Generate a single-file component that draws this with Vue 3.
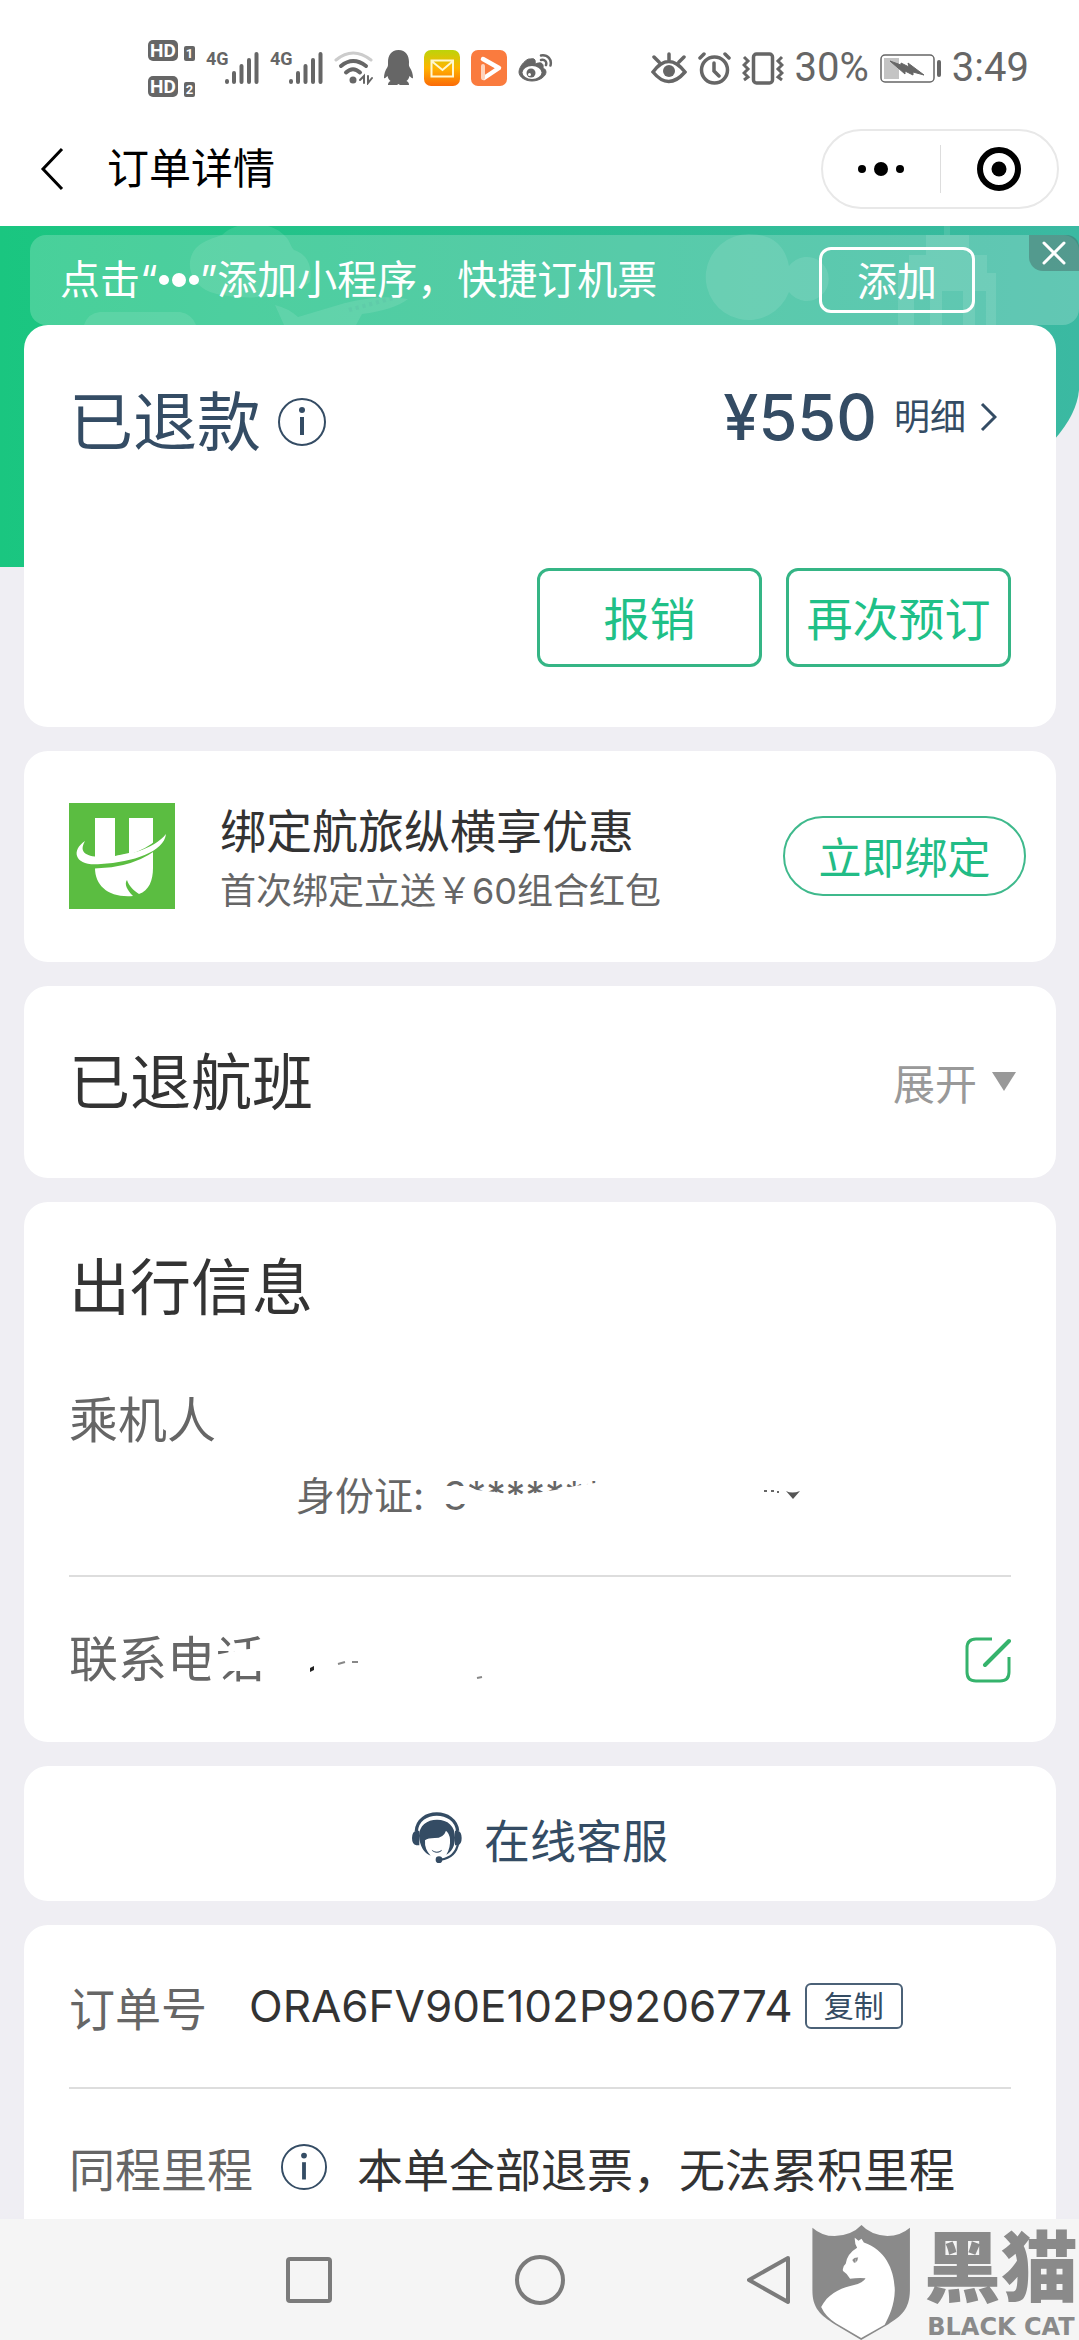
<script setup>
import { ref } from "vue";

const order = ref({
  status: "已退款",
  price: "¥550",
  number: "ORA6FV90E102P9206774",
  mileage: "本单全部退票，无法累积里程",
  idCard: "3*******",
});
const showTip = ref(true);
</script>

<template>
  <div class="page">
    <header class="status-bar">
      <div class="status-group">
        <div class="hd-list">
          <div v-for="n in 2" :key="n" class="hd-row">
            <span class="hd">HD</span><span class="sim">{{ n }}</span>
          </div>
        </div>
        <div v-for="n in 2" :key="n" class="signal">
          <span class="net">4G</span>
          <svg width="35" height="34" viewBox="0 0 35 34" stroke="#666" stroke-width="4" stroke-linecap="round">
            <path d="M3 30v1M10 22v9M17.500 15v16M25 9v22M32.500 3v28" />
          </svg>
        </div>
        <svg width="39" height="34" viewBox="0 0 39 34" fill="none" stroke-width="4" stroke-linecap="round">
          <path d="M2 9Q19 -5 37 9" stroke="#ccc" stroke-width="3" />
          <path d="M7 15Q19 5 32 15M12 21.500Q19 15 26 21.500" stroke="#666" />
          <circle cx="19" cy="29" r="3.500" fill="#666" />
          <path d="M26 29l4-4v7M34 25v7l4-5" stroke="#666" stroke-width="2" />
        </svg>
        <svg width="29" height="36" viewBox="0 0 29 36" fill="#666">
          <path d="M14.500 0C7 0 4 6 4 12c0 2 .3 3-.5 5C1 21 0 24 0 28c1 1 2-1 3.500-2 .5 2 1.500 4 3 5-2 1-2.500 2-2.500 4h9l1.500-1 1.500 1h9c0-2-.5-3-2.500-4 1.500-1 2.500-3 3-5 1.500 1 2.500 3 3.500 2 0-4-1-7-3.500-11-.8-2-.5-3-.5-5 0-6-3-12-10.500-12z" />
        </svg>
        <svg width="36" height="36" viewBox="0 0 36 36">
          <defs>
            <linearGradient id="mailFill" x2="0" y2="1">
              <stop offset="0" stop-color="#bcd40a" />
              <stop offset="0.500" stop-color="#ffb400" />
              <stop offset="1" stop-color="#fb6a08" />
            </linearGradient>
          </defs>
          <rect width="36" height="36" rx="7" fill="url(#mailFill)" />
          <path d="M7.500 10.500h21.500v16h-21.500zM7.500 11l11 9 10.500-9" fill="none" stroke="#fff7d0" stroke-width="2" />
        </svg>
        <svg width="36" height="36" viewBox="0 0 36 36">
          <rect width="36" height="36" rx="7" fill="#fa7b3e" />
          <path d="M12 9l16 9-15 10" fill="none" stroke="#fff" stroke-width="4.500" stroke-linecap="round" stroke-linejoin="round" />
          <path d="M12 16v12" stroke="#ffd3bb" stroke-width="4" stroke-linecap="round" />
        </svg>
        <svg width="35" height="29" viewBox="0 0 35 29" fill="none" stroke="#666">
          <path d="M12 5c-3-1-11 7-11 13 0 5 6 9 13 9 8 0 14-5 14-9 0-3-3-4-3-4s1-4-2-5c-2-.6-6 1-6 1s1-4-1-5c-1-.5-3 0-4 0z" fill="#666" />
          <ellipse cx="14" cy="18.500" rx="9.500" ry="6.500" fill="#fff" stroke="none" />
          <circle cx="13" cy="19" r="4.500" fill="#666" stroke="none" />
          <circle cx="11.500" cy="20.500" r="1.500" fill="#fff" stroke="none" />
          <path d="M23 6c4-1 6 2 5 5M23 1.500c7-1 11 4 9.500 10" stroke-width="2.500" stroke-linecap="round" />
        </svg>
      </div>
      <div class="status-group">
        <svg width="36" height="32" viewBox="0 0 36 32" fill="none" stroke="#666" stroke-width="3.500" stroke-linecap="round">
          <path d="M2 20Q17.500 -1 34 20Q17.500 39 2 20zM18 8V2M8 10L3 5M28 10l5-5" />
          <circle cx="18" cy="19" r="6" fill="#666" stroke="none" />
        </svg>
        <svg width="33" height="33" viewBox="0 0 33 33" fill="none" stroke="#666" stroke-width="3.500" stroke-linecap="round">
          <circle cx="16.500" cy="18" r="13" />
          <path d="M16 11v8l5 5M2 6l4-4M31 6l-4-4" />
        </svg>
        <svg width="42" height="33" viewBox="0 0 42 33" fill="none" stroke="#666" stroke-width="3.500">
          <rect x="11.500" y="2" width="19" height="29" rx="3" />
          <path d="M2 5l4 4-4 4 4 4-4 4 4 4-4 3M40 5l-4 4 4 4-4 4 4 4-4 4 4 3" stroke-width="3" />
        </svg>
        <span class="status-text">30%</span>
        <svg width="61" height="29" viewBox="0 0 61 29">
          <rect x="1" y="1" width="53" height="27" rx="4" fill="none" stroke="#666" stroke-width="1.500" />
          <rect x="4" y="4" width="15" height="21" fill="#c4c4c4" />
          <path d="M10 7l11 4 0-2 8 4-1-4 16 12-11-3 0 3-8-4 0 3z" fill="#666" stroke="#666" />
          <rect x="57" y="6" width="4" height="17" rx="2" fill="#666" />
        </svg>
        <span class="status-text">3:49</span>
      </div>
    </header>

    <nav class="nav">
      <button class="plain" aria-label="返回">
        <svg width="24" height="44" viewBox="0 0 24 44" fill="none" stroke="#000" stroke-width="3">
          <path d="M22 2L3 22l19 20" />
        </svg>
      </button>
      <h1>订单详情</h1>
      <div class="capsule">
        <button class="plain" aria-label="更多">
          <svg width="48" height="16" viewBox="0 0 48 16">
            <circle cx="5" cy="8" r="4" /><circle cx="24" cy="8" r="7" /><circle cx="43" cy="8" r="4" />
          </svg>
        </button>
        <button class="plain" aria-label="关闭">
          <svg width="44" height="44" viewBox="0 0 44 44">
            <circle cx="22" cy="22" r="19" fill="none" stroke="#000" stroke-width="6" />
            <circle cx="22" cy="22" r="7.500" />
          </svg>
        </button>
      </div>
    </nav>

    <main>
      <svg class="hero" viewBox="0 0 1079 341" preserveAspectRatio="none">
        <defs>
          <linearGradient id="heroFill">
            <stop offset="0" stop-color="#1ac680" />
            <stop offset="1" stop-color="#3bb9a2" />
          </linearGradient>
        </defs>
        <path d="M0 0H1079V164Q1077 188 1054 214L900 341H0z" fill="url(#heroFill)" />
        <g fill="#fff" fill-opacity="0.1">
          <path d="M222 9C235 -5 270 -8 287 12C291 18 291 21 294 24C306 28 313 38 310 56C290 72 240 76 210 66C190 58 184 36 196 22C204 14 214 12 222 9z" />
          <path d="M84 99Q88 87 100 86H180Q192 88 196 99z" />
          <path d="M284 99L275 79Q288 82 298 91L345 77Q380 68 408 73Q394 84 362 88L356 99z" />
          <path d="M749 8a43 43 0 1 0 40 58a22 22 0 1 0 0-26q-6-32-40-32z" />
          <path d="M898 99V47H909V29H926V9H944V0H950V9H969V29H987V47H996V99H986V65H975V99H963V65H942V99H930V65H914V99z" />
        </g>
        <path d="M349 84l48-13" stroke="#35b891" stroke-opacity="0.5" stroke-width="4" stroke-dasharray="3 4" />
      </svg>

      <div v-if="showTip" class="tip">
        <p>
          点击“<svg width="42" height="16" viewBox="0 0 42 16" fill="#fff">
            <circle cx="6" cy="8" r="5" /><circle cx="21" cy="8" r="7" /><circle cx="36" cy="8" r="5" /></svg>”添加小程序，快捷订机票
        </p>
        <button class="tip-add">添加</button>
        <button class="tip-close" aria-label="关闭提示" @click="showTip = false">
          <svg width="24" height="24" viewBox="0 0 24 24" stroke="#fff" stroke-width="3" stroke-linecap="round">
            <path d="M2 2l20 20M22 2L2 22" />
          </svg>
        </button>
      </div>

      <div class="cards">
        <section class="card refund">
          <div class="refund-head">
            <h2>{{ order.status }}</h2>
            <svg class="info" width="48" height="48" viewBox="0 0 48 48">
              <circle cx="24" cy="24" r="23" fill="none" stroke="#344c64" stroke-width="2" />
              <circle cx="24" cy="12" r="3" fill="#344c64" />
              <path d="M24 19v18" stroke="#344c64" stroke-width="4" />
            </svg>
            <a class="price" href="#">
              <strong>{{ order.price }}</strong>
              <span>明细</span>
              <svg width="17" height="30" viewBox="0 0 17 30" fill="none" stroke="#344c64" stroke-width="3">
                <path d="M2 2l13 13L2 28" />
              </svg>
            </a>
          </div>
          <div class="actions">
            <button>报销</button>
            <button>再次预订</button>
          </div>
        </section>

        <section class="card bind">
          <svg width="106" height="106" viewBox="0 0 106 106">
            <rect width="106" height="106" fill="#5bbd41" />
            <path d="M26 15h20v38l14-3V15h24v50c0 12-4 23-14 26-6-4-10-8-12-14-3 4 0 10 6 16-24 2-38-10-38-28z" fill="#fff" />
            <path d="M12 42C3 57 14 63 32 61C60 60 84 48 97 33" fill="none" stroke="#5bbd41" stroke-width="8" />
            <path d="M16 38C1 48 6 64 32 61C64 59 95 49 97 31C84 47 57 53 34 54C18 54 9 50 16 38z" fill="#fff" />
          </svg>
          <div class="bind-text">
            <h3>绑定航旅纵横享优惠</h3>
            <p>首次绑定立送￥60组合红包</p>
          </div>
          <button>立即绑定</button>
        </section>

        <section class="card flights">
          <h2>已退航班</h2>
          <button class="plain">
            展开
            <svg width="26" height="19" viewBox="0 0 26 19"><path d="M1 0h24L13 19z" fill="#999" /></svg>
          </button>
        </section>

        <section class="card travel">
          <h2>出行信息</h2>
          <div class="passenger">
            <p class="label">乘机人</p>
            <p class="id-card">
              <span>身份证:</span>
              <span>{{ order.idCard }}</span>
              <svg class="mask" width="800" height="48" viewBox="0 0 800 48">
                <path d="M370 14H398L408 18L426 20L446 23L466 21L486 18L506 14L526 11L560 6V34H402L396 32H370z" fill="#fff" />
                <path d="M695 19h3M702 19h3M708 20h2" stroke="#666" stroke-width="2" />
                <path d="M717 19q6 3 14 0l-7 8z" fill="#555" />
              </svg>
            </p>
          </div>
          <div class="phone">
            <p class="label">
              联系电话
              <svg class="mask" width="440" height="60" viewBox="0 0 440 60">
                <path d="M141 26L151 24L171 20L198 17V41H160L154 47L144 58L138 38z" fill="#fff" />
                <path d="M241 38l4-2v4l-4 2z" fill="#222" />
                <path d="M269 34l7-2M283 32h6M408 48l5-1" stroke="#888" stroke-width="2" />
              </svg>
            </p>
            <button class="plain" aria-label="修改联系电话">
              <svg width="46" height="46" viewBox="0 0 46 46" fill="none" stroke="#35b36c" stroke-width="3">
                <path d="M27 2H11Q2 2 2 11V35Q2 44 11 44H35Q44 44 44 35V20" />
                <path d="M20 28L44 4" stroke-width="4" stroke-linecap="round" />
              </svg>
            </button>
          </div>
        </section>

        <a class="card service" href="#">
          <svg width="50" height="51" viewBox="100 153 150 153">
            <path d="M113 210C118 142 230 142 237 210" fill="none" stroke="#344c64" stroke-width="10" />
            <path d="M113 209q-13 3-13 22t13 22h9v-44zM237 209q12 3 12 22t-12 22h-8v-44z" fill="#344c64" />
            <path d="M121 225C121 194 145 176 175 176C207 176 230 195 229 230C229 255 219 272 203 281Q216 261 214 235Q213 218 202 209Q195 231 168 231Q148 231 139 238Q137 265 156 284Q125 272 121 225z" fill="#344c64" />
            <path d="M159 266q15 12 31 0q-2 8-15 9-13-1-16-9z" fill="#344c64" />
            <path d="M239 245Q231 290 186 296" fill="none" stroke="#344c64" stroke-width="7" />
            <circle cx="181" cy="296" r="10" fill="#344c64" />
          </svg>
          在线客服
        </a>

        <section class="card detail">
          <div class="detail-row">
            <span class="detail-label">订单号</span>
            <span class="order-no">{{ order.number }}</span>
            <button class="copy">复制</button>
          </div>
          <div class="detail-row">
            <span class="detail-label">同程里程</span>
            <svg width="46" height="46" viewBox="0 0 48 48">
              <circle cx="24" cy="24" r="23" fill="none" stroke="#344c64" stroke-width="2" />
              <circle cx="24" cy="12" r="3" fill="#344c64" />
              <path d="M24 19v18" stroke="#344c64" stroke-width="4" />
            </svg>
            <span>{{ order.mileage }}</span>
          </div>
        </section>
      </div>
    </main>

    <footer class="system-nav">
      <button class="plain" aria-label="最近任务">
        <svg width="48" height="52" viewBox="0 0 48 52" fill="none" stroke="#7b7b7b" stroke-width="4">
          <rect x="3" y="5" width="42" height="42" rx="2" />
        </svg>
      </button>
      <button class="plain" aria-label="主屏幕">
        <svg width="52" height="52" viewBox="0 0 52 52" fill="none" stroke="#7b7b7b" stroke-width="4">
          <circle cx="26" cy="26" r="23" />
        </svg>
      </button>
      <button class="plain" aria-label="后退">
        <svg width="48" height="52" viewBox="0 0 48 52" fill="none" stroke="#7b7b7b" stroke-width="4" stroke-linejoin="round">
          <path d="M41 4L2 26l39 22z" />
        </svg>
      </button>
      <div class="watermark">
        <svg width="98" height="115" viewBox="180 75 291 342">
          <path d="M181 83Q209 108 247 108Q298 106 327 75Q353 104 404 108Q443 107 471 83V270C470 325 446 346 407 370L326 417L247 370C205 343 181 323 181 270z" fill="#8a8a8a" />
          <path d="M307 113L318 122L327 116L334 127C400 150 425 210 426 270C425 315 409 347 396 372L326 411L251 367Q220 348 207 319C228 278 265 263 302 254Q333 247 339 233Q315 231 293 235Q284 219 272 212Q269 199 280 190Q285 160 314 143Q306 131 307 113z" fill="#fff" />
          <path d="M299 179q6-9 18-8q-1 16-12 17zM309 176v10" fill="#8a8a8a" stroke="#fff" />
        </svg>
        <div class="brand">
          <span class="brand-cn">黑猫</span>
          <span class="brand-en">BLACK CAT</span>
        </div>
      </div>
    </footer>
  </div>
</template>

<style>
body {
  margin: 0;
  background: #efeef3;
}
</style>

<style scoped>
.page {
  display: flex;
  flex-direction: column;
  height: 100vh;
  overflow: hidden;
  font-family: Inter, "Noto Sans CJK SC", sans-serif;
  color: #333;
  background: #efeef3;
}
h1,
h2,
h3,
p {
  margin: 0;
  font-weight: 400;
}
svg {
  flex: none;
}
button {
  font: inherit;
  color: inherit;
  padding: 0;
  background: none;
  box-sizing: border-box;
}
a {
  color: inherit;
  text-decoration: none;
}
.plain {
  display: flex;
  align-items: center;
  border: 0;
}

.status-bar {
  flex: none;
  display: flex;
  justify-content: space-between;
  height: 112px;
  padding: 12px 50px 0 148px;
  box-sizing: border-box;
  background: #fff;
}
.status-group {
  display: flex;
  align-items: center;
  gap: 11px;
  height: 112px;
}
.hd-list {
  display: flex;
  flex-direction: column;
  gap: 15px;
}
.hd-row {
  display: flex;
  align-items: flex-end;
  gap: 6px;
}
.hd,
.sim {
  font-family: Roboto, sans-serif;
  font-weight: 700;
  color: #fff;
  text-align: center;
  background: #666;
}
.hd {
  width: 30px;
  font-size: 19px;
  line-height: 21px;
  border-radius: 5px;
}
.sim {
  width: 11px;
  font-size: 13px;
  line-height: 15px;
  border-radius: 2px;
}
.signal {
  display: flex;
  align-items: flex-start;
}
.net {
  width: 18px;
  font-family: Roboto, sans-serif;
  font-size: 18px;
  font-weight: 700;
  line-height: 16px;
  color: #666;
}
.status-text {
  font-family: Roboto, sans-serif;
  font-size: 40px;
  line-height: 48px;
  color: #666;
}

.nav {
  flex: none;
  display: flex;
  align-items: center;
  height: 114px;
  padding: 0 20px 0 40px;
  box-sizing: border-box;
  color: #000;
  background: #fff;
}
h1 {
  flex: 1;
  margin-left: 43px;
  font-size: 42px;
  line-height: 56px;
}
.capsule {
  display: flex;
  align-items: center;
  width: 238px;
  height: 80px;
  box-sizing: border-box;
  border: 2px solid #e8e8e8;
  border-radius: 40px;
}
.capsule button {
  flex: 1;
  justify-content: center;
  height: 48px;
}
.capsule button + button {
  border-left: 1px solid #ddd;
}

main {
  position: relative;
  flex: 1;
  min-height: 0;
  overflow: hidden;
}
.hero {
  position: absolute;
  top: 0;
  left: 0;
  width: 100%;
  height: 341px;
}
.tip {
  position: relative;
  display: flex;
  align-items: center;
  height: 90px;
  margin: 9px 0 0 30px;
  padding: 0 104px 0 30px;
  font-size: 40px;
  color: #fff;
  background: rgba(255, 255, 255, 0.2);
  border-radius: 16px;
}
.tip p {
  flex: 1;
  line-height: 56px;
}
.tip p svg {
  vertical-align: 6px;
}
.tip-add {
  width: 156px;
  height: 66px;
  padding-bottom: 3px;
  border: 3px solid #fff;
  border-radius: 12px;
}
.tip-close {
  position: absolute;
  top: 0;
  right: 0;
  display: flex;
  align-items: center;
  justify-content: center;
  width: 50px;
  height: 36px;
  border: 0;
  border-radius: 0 12px 0 14px;
  background: rgba(70, 110, 105, 0.5);
}

.cards {
  position: relative;
  display: flex;
  flex-direction: column;
  gap: 24px;
  padding: 0 23px 0 24px;
}
.card {
  padding: 0 45px;
  border-radius: 24px;
  background: #fff;
}
.card h2 {
  font-size: 61px;
  line-height: 72px;
}

.refund {
  padding-top: 60px;
  padding-bottom: 60px;
  color: #344c64;
}
.refund-head {
  display: flex;
  align-items: flex-start;
}
.refund .refund-head h2 {
  font-size: 64px;
  line-height: 74px;
}
.info {
  margin: 13px 0 0 17px;
}
.price {
  display: flex;
  align-items: center;
  margin: 0 14px 0 auto;
  font-size: 36px;
  line-height: 64px;
}
.price strong {
  margin-right: 17px;
  font-size: 63px;
  font-weight: 500;
}
.price svg {
  margin-left: 14px;
}
.actions {
  display: flex;
  justify-content: flex-end;
  gap: 24px;
  margin-top: 109px;
}
.actions button {
  width: 225px;
  height: 99px;
  padding-bottom: 3px;
  font-size: 46px;
  color: #20c087;
  border: 3px solid #35b585;
  border-radius: 12px;
}

.bind {
  display: flex;
  align-items: center;
  padding: 40px 30px 41px 45px;
}
.bind-text {
  flex: 1;
  margin-left: 45px;
  padding-top: 10px;
  font-size: 36px;
  line-height: 60px;
  color: #666;
}
.bind-text h3 {
  font-size: 46px;
  color: #333;
}
.bind button {
  width: 243px;
  height: 80px;
  padding-bottom: 3px;
  font-size: 43px;
  color: #22bc86;
  border: 2px solid #3fb98c;
  border-radius: 40px;
}

.flights {
  display: flex;
  align-items: center;
  justify-content: space-between;
  padding-top: 61px;
  padding-bottom: 59px;
  padding-right: 39px;
}
.flights button {
  gap: 14px;
  padding-bottom: 3px;
  font-size: 42px;
  color: #999;
}

.travel {
  padding-top: 50px;
}
.label {
  position: relative;
  font-size: 49px;
  line-height: 60px;
  color: #666;
}
.passenger {
  margin-top: 67px;
  padding-bottom: 55px;
  border-bottom: 2px solid #ddd;
}
.id-card {
  position: relative;
  display: flex;
  gap: 19px;
  margin-top: 21px;
  padding-left: 227px;
  font-size: 39px;
  line-height: 48px;
  color: #666;
}
/* white smear hiding personal data */
.mask {
  position: absolute;
  top: 0;
  left: 0;
}
.phone {
  display: flex;
  align-items: center;
  justify-content: space-between;
  padding: 53px 0 52px;
}

.service {
  display: flex;
  align-items: center;
  justify-content: center;
  gap: 22px;
  height: 127px;
  padding-top: 8px;
  font-size: 46px;
  color: #344c64;
}

.detail {
  border-radius: 24px 24px 0 0;
}
.detail-row {
  display: flex;
  align-items: center;
  height: 162px;
  font-size: 46px;
}
.detail-row + .detail-row {
  height: 156px;
  border-top: 2px solid #ddd;
}
.detail-label {
  color: #666;
}
.order-no {
  margin-left: 42px;
  font-size: 44px;
}
.copy {
  width: 98px;
  height: 46px;
  margin-left: 12px;
  font-size: 30px;
  line-height: 40px;
  color: #344c64;
  border: 2px solid #4b6177;
  border-radius: 6px;
}
.detail-row svg {
  margin: 0 30px 0 28px;
}

.system-nav {
  position: relative;
  flex: none;
  display: flex;
  align-items: center;
  justify-content: center;
  gap: 181px;
  height: 121px;
  background: #f5f5f5;
}
.watermark {
  position: absolute;
  right: 1px;
  bottom: 0;
  display: flex;
  align-items: flex-end;
  gap: 14px;
  color: #8a8a8a;
}
.brand {
  display: flex;
  flex-direction: column;
  align-items: center;
}
.brand-cn {
  font-size: 77px;
  font-weight: 900;
  line-height: 91px;
}
.brand-en {
  font-family: "DejaVu Sans", sans-serif;
  font-size: 24px;
  font-weight: 700;
  line-height: 26px;
  white-space: nowrap;
}
</style>
